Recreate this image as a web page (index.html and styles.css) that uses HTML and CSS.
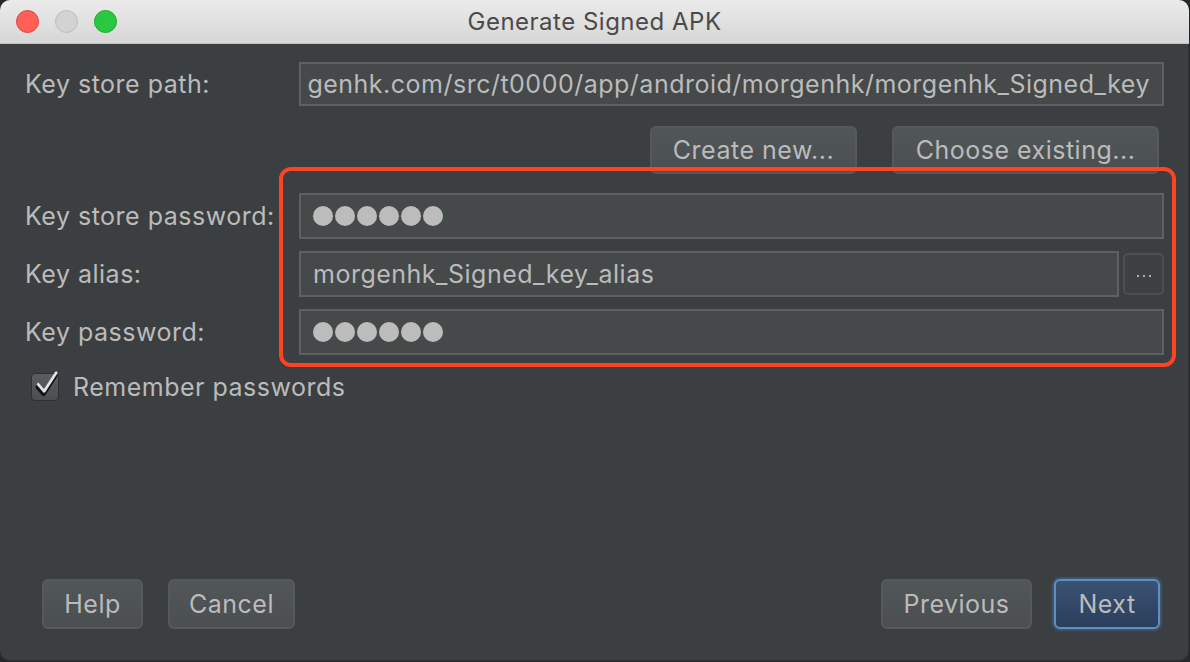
FILE: index.html
```html
<!DOCTYPE html>
<html>
<head>
<meta charset="utf-8">
<link rel="stylesheet" href="styles.css">
</head>
<body>
<div class="window">
  <div class="titlebar">
    <div class="lights">
      <span class="light red"></span>
      <span class="light gray"></span>
      <span class="light green"></span>
    </div>
    <div class="title">Generate Signed APK</div>
  </div>
  <div class="content">
    <div class="row">
      <div class="label">Key store path:</div>
      <div class="field path"><span>genhk.com/src/t0000/app/android/morgenhk/morgenhk_Signed_key</span></div>
    </div>
    <div class="btnrow">
      <div class="btn">Create new...</div>
      <div class="btn">Choose existing...</div>
    </div>
    <div class="row r1">
      <div class="label">Key store password:</div>
      <div class="field"><span class="dots"><i></i><i></i><i></i><i></i><i></i><i></i></span></div>
    </div>
    <div class="row r2">
      <div class="label">Key alias:</div>
      <div class="field alias">morgenhk_Signed_key_alias</div>
      <div class="more"><b></b><b></b><b></b></div>
    </div>
    <div class="row r2">
      <div class="label">Key password:</div>
      <div class="field"><span class="dots"><i></i><i></i><i></i><i></i><i></i><i></i></span></div>
    </div>
    <div class="check">
      <span class="box"><svg width="30" height="30" viewBox="0 0 30 30"><path d="M6 15.5 L12 22.5 L24 4" fill="none" stroke="#111213" stroke-width="4" stroke-linecap="round" stroke-linejoin="round" transform="translate(0.6,1.6)"/><path d="M6 15.5 L12 22.5 L24 4" fill="none" stroke="#e2e2e2" stroke-width="2.8" stroke-linecap="round" stroke-linejoin="round" transform="translate(1.2,-1.2)"/></svg></span>
      <span class="checklabel">Remember passwords</span>
    </div>
    <div class="footer">
      <div class="left">
        <div class="btn b-help">Help</div>
        <div class="btn b-cancel">Cancel</div>
      </div>
      <div class="right">
        <div class="btn b-prev">Previous</div>
        <div class="btn b-next">Next</div>
      </div>
    </div>
  </div>
  <div class="highlight"></div>
</div>
</body>
</html>
```

FILE: styles.css
```css
html, body {
  margin: 0;
  padding: 0;
  background: #262728;
  width: 1190px;
  height: 662px;
  overflow: hidden;
}
body {
  font-family: Inter, "Liberation Sans", sans-serif;
}
.window {
  position: relative;
  width: 1189px;
  height: 661px;
  background: #3c3f41;
  border-radius: 10px;
  overflow: hidden;
  display: flex;
  flex-direction: column;
  box-shadow: inset -1px 0 0 #303233, inset 0 -1px 0 #303233;
}
.titlebar {
  height: 43px;
  flex: 0 0 43px;
  background: linear-gradient(#ebebeb, #d6d6d6);
  border-bottom: 1px solid #c2c2c2;
  display: flex;
  align-items: center;
  position: relative;
}
.lights {
  display: flex;
  gap: 16px;
  padding-left: 16px;
}
.light {
  width: 23px;
  height: 23px;
  border-radius: 50%;
  box-sizing: border-box;
}
.red { background: #fe5f57; border: 1px solid #e0443e; }
.gray { background: #d3d3d3; border: 1px solid #bcbcbc; }
.green { background: #29c840; border: 1px solid #1aab29; }
.title {
  position: absolute;
  left: 0;
  right: 0;
  text-align: center;
  font-size: 24px;
  letter-spacing: 0.5px;
  color: #4a4a4a;
  top: 7px;
}
.content {
  flex: 1;
  display: flex;
  flex-direction: column;
  padding: 18px 25px 32px 25px;
  color: #bbbbbb;
  font-size: 25px;
  letter-spacing: 0.5px;
}
.row {
  display: flex;
  align-items: center;
}
.label {
  width: 274px;
  flex: 0 0 274px;
  color: #bbbbbb;
  white-space: nowrap;
}
.field {
  flex: 1;
  height: 44px;
  box-sizing: border-box;
  border: 2px solid #5e6161;
  background: #45494a;
  display: flex;
  align-items: center;
  padding: 0 12px;
  color: #bbbbbb;
  overflow: hidden;
  white-space: nowrap;
}
.path {
  justify-content: flex-end;
}
.r1 { margin-top: 19px; }
.r2 { margin-top: 12px; }
.r1 .field, .r2 .field { height: 46px; }
.alias { flex: 1; }
.more {
  width: 41px;
  height: 42px;
  box-sizing: border-box;
  margin-left: 4px;
  border: 2px solid #4d5052;
  border-radius: 5px;
  background: #3e4143;
  display: flex;
  align-items: center;
  justify-content: center;
  gap: 4px;
  padding-top: 4px;
}
.more b {
  display: block;
  width: 2px;
  height: 2px;
  background: #b0b0b0;
}
.dots {
  display: flex;
  gap: 2px;
}
.dots i {
  display: block;
  width: 20px;
  height: 20px;
  border-radius: 50%;
  background: #bcbcbc;
}
.btnrow {
  display: flex;
  justify-content: flex-end;
  gap: 35px;
  margin-top: 20px;
  padding-right: 5px;
}
.btn {
  height: 48px;
  box-sizing: border-box;
  border: 2px solid #55595b;
  border-radius: 6px;
  background: linear-gradient(#515658, #4b4f51);
  color: #bbbbbb;
  display: flex;
  align-items: center;
  justify-content: center;
  white-space: nowrap;
}
.btnrow .btn:first-child { width: 207px; }
.btnrow .btn:last-child { width: 267px; }
.check {
  display: flex;
  align-items: center;
  margin-top: 17px;
  padding-left: 6px;
}
.box {
  width: 28px;
  height: 28px;
  box-sizing: border-box;
  border-radius: 4px;
  background: linear-gradient(#5a5d5f, #4b4e50);
  border: 1px solid #2e3031;
  display: flex;
  align-items: center;
  justify-content: center;
  overflow: visible;
}
.box svg {
  flex: 0 0 auto;
  margin-top: -4px;
  margin-left: 2px;
}
.checklabel {
  margin-left: 14px;
}
.footer {
  margin-top: auto;
  display: flex;
  justify-content: space-between;
  padding: 0 4px 0 17px;
}
.left, .right {
  display: flex;
  gap: 25px;
}
.right { gap: 22px; }
.footer .btn { height: 50px; }
.b-help { width: 101px; }
.b-cancel { width: 127px; }
.b-prev { width: 151px; }
.b-next {
  width: 106px;
  border-color: #5d8fc7;
  background: linear-gradient(#3a5274, #2b3f5c);
  box-shadow: 0 0 3px 1px rgba(80, 130, 190, 0.6);
}
.highlight {
  position: absolute;
  left: 279px;
  top: 167px;
  width: 897px;
  height: 200px;
  box-sizing: border-box;
  border: 4px solid #fc4520;
  border-radius: 12px;
}
```
